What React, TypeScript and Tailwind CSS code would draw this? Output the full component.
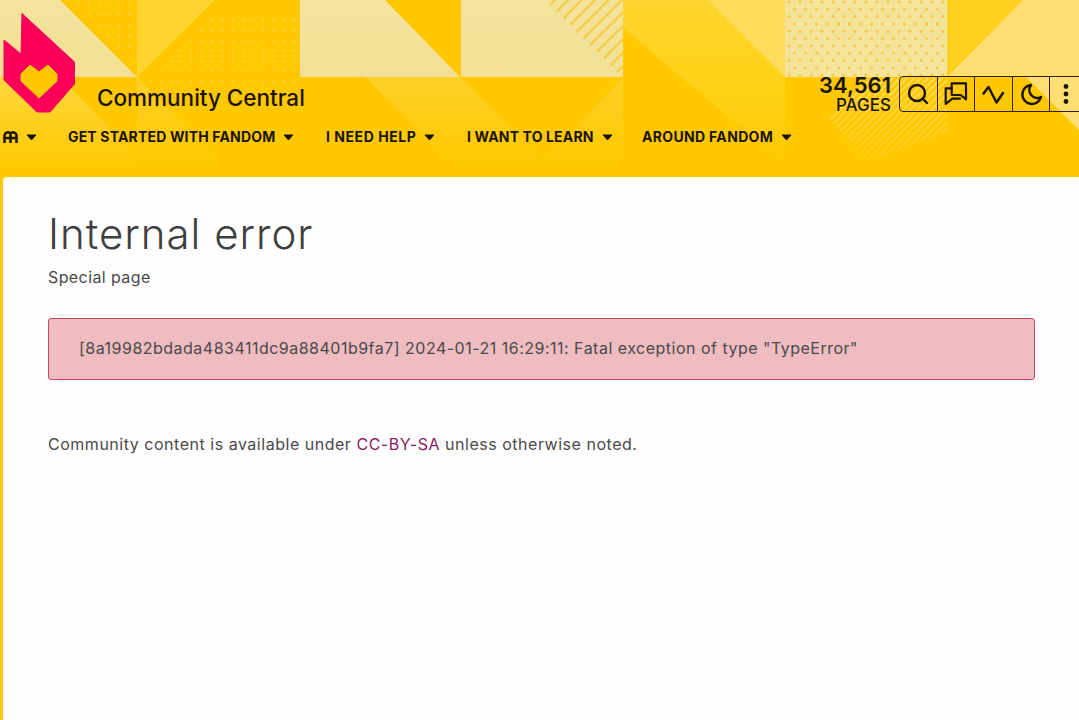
import { Search } from "lucide-react";

const INK = "#1a1400";

function Caret() {
  return (
    <svg width="11" height="7" viewBox="0 0 11 7" className="ml-[8px] mt-[1px] shrink-0">
      <path d="M1 1h9L5.500 6z" fill={INK} stroke={INK} strokeLinejoin="round" />
    </svg>
  );
}

function Banner() {
  const dots: { x: number; y: number }[] = [];
  for (let y = 5; y < 75; y += 10.3) {
    for (let x = 68; x < 136; x += 10.3) {
      if (x - 60 > y + 4) dots.push({ x, y });
    }
  }
  for (let y = 20; y < 82; y += 10.3) {
    for (let x = 140; x < 297; x += 10.3) {
      if (x + y > 225) dots.push({ x, y });
    }
  }
  const grid: { x: number; y: number }[] = [];
  for (let r = 0; r < 11; r++) {
    for (let c = 0; c < 15; c++) {
      grid.push({ x: 789 + c * 11 + (r % 2 ? 5.5 : 0), y: 2 + r * 7.3 });
    }
  }
  const stripes = [0, 1, 2, 3, 4, 5, 6, 7, 8, 9, 10];
  const fine = Array.from({ length: 32 }, (_, i) => 780 + i * 7);
  return (
    <svg className="absolute inset-0" width="1079" height="177" viewBox="0 0 1079 177">
      <defs>
        <linearGradient id="fadeA" x1="0" y1="77" x2="0" y2="170" gradientUnits="userSpaceOnUse">
          <stop offset="0" stopColor="#ffd63d" />
          <stop offset="1" stopColor="#ffc800" />
        </linearGradient>
        <linearGradient id="fadeB" x1="0" y1="77" x2="0" y2="165" gradientUnits="userSpaceOnUse">
          <stop offset="0" stopColor="#ffd028" />
          <stop offset="1" stopColor="#ffc800" />
        </linearGradient>
        <linearGradient id="fadeC" x1="0" y1="0" x2="0" y2="165" gradientUnits="userSpaceOnUse">
          <stop offset="0" stopColor="#ffd52e" />
          <stop offset="0.6" stopColor="#ffd014" />
          <stop offset="1" stopColor="#ffc800" />
        </linearGradient>
        <linearGradient id="fadeFine" x1="0" y1="78" x2="0" y2="162" gradientUnits="userSpaceOnUse">
          <stop offset="0" stopColor="#ffdd63" />
          <stop offset="1" stopColor="#ffcc10" />
        </linearGradient>
        <linearGradient id="pale" x1="0" y1="0" x2="0" y2="77" gradientUnits="userSpaceOnUse">
          <stop offset="0" stopColor="#f4e39c" />
          <stop offset="1" stopColor="#f3e096" />
        </linearGradient>
        <clipPath id="fineClip">
          <polygon points="793,78 947,78 947,132 868,162" />
        </clipPath>
      </defs>
      <rect width="1079" height="177" fill="#ffc800" />
      {/* top row */}
      <polygon points="0,0 60,0 137,77 0,77" fill="url(#pale)" />
      <polygon points="137,0 215,0 137,77" fill="#ffd42e" />
      <polygon points="300,0 385,0 460,77 300,77" fill="url(#pale)" />
      <rect x="461" y="0" width="162" height="77" fill="url(#pale)" />
      <polygon points="623,0 785,0 785,165 623,28" fill="url(#fadeC)" />
      <polygon points="708,0 785,0 785,77" fill="#ffdc5c" />
      <rect x="785" y="0" width="162" height="77" fill="#f5e39a" />
      <polygon points="947,0 1023,0 947,75" fill="#ffd21f" />
      <polygon points="1023,0 1079,0 1079,130 1026,77 947,77" fill="#ffdf74" />
      {/* lower row, fading into the base colour */}
      <polygon points="0,77 60,77 145,165 0,165" fill="url(#fadeA)" />
      <polygon points="137,77 225,165 137,165" fill="url(#fadeB)" />
      <polygon points="365,77 460,77 548,165 453,165" fill="url(#fadeB)" />
      <polygon points="539,165 623,78 623,165" fill="url(#fadeB)" />
      {/* dots and stripes */}
      {dots.map((d, i) => (
        <circle key={i} cx={d.x} cy={d.y} r="1.1" fill="#ffd649" />
      ))}
      {grid.map((d, i) => (
        <circle key={i} cx={d.x} cy={d.y} r="1.5" fill="#f5cb42" />
      ))}
      <g stroke="#f5cf4a" strokeWidth="2.4">
        {stripes.map((i) => {
          const sx = 550 + i * 6.7;
          const sy = 5 + i * 6.7;
          const d = Math.min(sy, 623 - sx);
          return <line key={i} x1={sx} y1={sy} x2={sx + d} y2={sy - d} />;
        })}
      </g>
      <g clipPath="url(#fineClip)">
        <g stroke="url(#fadeFine)" strokeWidth="1.800">
          {fine.map((k) => (
            <line key={k} x1={k} y1={170} x2={k + 92} y2={78} />
          ))}
        </g>
      </g>
    </svg>
  );
}

function Logo() {
  return (
    <svg width="72" height="100" viewBox="3 13 72 100" className="shrink-0">
      <path d="M22 13.500 74.500 62v22L50 112H37L4 80V40l17 14z" fill="#fa005a" stroke="#fa005a" strokeLinejoin="round" />
      <path d="M30 65l9 7 9-7 9 9v7L39 98 21 81v-7z" fill="#ffc800" stroke="#ffc800" strokeLinejoin="round" />
    </svg>
  );
}

function ToolButton({ children, last }: { children: React.ReactNode; last?: boolean }) {
  return (
    <div
      className={
        last
          ? "w-[38px] h-full flex items-center justify-center pr-[7px]"
          : "w-[38px] h-full flex items-center justify-center border-r border-[#2a2000]"
      }
    >
      {children}
    </div>
  );
}

export default function App() {
  const navItems = [
    { label: "GET STARTED WITH FANDOM", cls: "w-[258px] tracking-[0.17px]" },
    { label: "I NEED HELP", cls: "w-[141px] tracking-[0.55px]" },
    { label: "I WANT TO LEARN", cls: "w-[175px] tracking-[0.15px]" },
    { label: "AROUND FANDOM", cls: "w-[180px] tracking-[0.33px]" },
  ];
  return (
    <div
      className="h-screen overflow-hidden bg-[#ffc800] text-[#3a3a3a]"
      style={{ fontFamily: "Inter, 'Noto Sans', sans-serif" }}
    >
      <header className="relative h-[177px] overflow-hidden">
        <Banner />
        <div className="relative flex flex-col h-full">
          <div className="flex items-start pl-[3px] h-[118px]">
            <div className="pt-[13px]">
              <Logo />
            </div>
            <div className="ml-[22px] mt-[84px] text-[22.5px] leading-[27px] font-medium text-[#1a1400]">
              Community Central
            </div>
            <div className="ml-auto flex items-start pt-[76px] w-[270px] justify-end">
              <div className="flex flex-col items-end mr-[8px] text-[#1a1400]">
                <div className="text-[22px] leading-[22px] font-semibold -mt-[2px]">34,561</div>
                <div className="text-[17px] leading-[17px] font-medium mt-[1px]">PAGES</div>
              </div>
              <div className="flex w-[190px] -mr-[10px] h-[36px] border border-[#2a2000] rounded-[4px] shrink-0">
                <ToolButton>
                  <Search size={24} strokeWidth={2.4} color={INK} />
                </ToolButton>
                <ToolButton>
                  <svg width="26" height="26" viewBox="0 0 26 26" fill="none" stroke={INK} strokeWidth="2.200" strokeLinejoin="round" strokeLinecap="round">
                    <path d="M8.700 12.300V2.300H23V18.300L17.700 14H8.700" />
                    <path d="M8.700 7.300H2.700V23L9.300 17.700H17" />
                  </svg>
                </ToolButton>
                <ToolButton>
                  <svg width="24" height="24" viewBox="0 0 24 24" fill="none" stroke={INK} strokeWidth="2.500" strokeLinecap="round" strokeLinejoin="round">
                    <path d="M2.500 11.500L7.500 5l8 15.500L22 11" />
                  </svg>
                </ToolButton>
                <ToolButton>
                  <svg width="24" height="24" viewBox="0 0 24 24" fill="none" stroke={INK} strokeWidth="2.500" strokeLinecap="round" strokeLinejoin="round">
                    <path d="M12 3a9.500 9.500 0 1 0 10 12 8 8 0 0 1-10-12z" />
                  </svg>
                </ToolButton>
                <ToolButton last>
                  <svg width="6" height="22" viewBox="0 0 6 22" fill={INK}>
                    <circle cx="3" cy="3.500" r="2.400" />
                    <circle cx="3" cy="11" r="2.400" />
                    <circle cx="3" cy="18.500" r="2.400" />
                  </svg>
                </ToolButton>
              </div>
            </div>
          </div>
          <nav className="flex items-center h-[37px] pl-[3px] text-[14px] font-bold text-[#1a1400]">
            <div className="flex items-center w-[65px]">
              <svg width="15" height="13" viewBox="0 0 15 13" fill="none" stroke={INK} strokeWidth="2.500" strokeLinejoin="round">
                <path d="M1.500 13V5a3.500 3.500 0 0 1 6 -1.500a3.500 3.500 0 0 1 6 1.500v8M1.500 8h12M7.500 4v9" />
              </svg>
              <Caret />
            </div>
            {navItems.map((t) => (
              <div key={t.label} className={`flex items-center whitespace-nowrap ${t.cls}`}>
                {t.label}
                <Caret />
              </div>
            ))}
          </nav>
        </div>
      </header>
      <main className="ml-[3px] h-[543px] bg-[#fefefe] rounded-tl-[4px] pl-[45px] pr-[44px] pt-[32px]">
        <h1 className="text-[42px] leading-[50px] font-light tracking-[1px] text-[#3f3f3f]">Internal error</h1>
        <div className="text-[16px] leading-[24px] mt-[6px] tracking-[0.4px] text-[#4a4a4a]">Special page</div>
        <div className="mt-[29px] h-[62px] rounded-[3px] border border-[#bf4d5f] bg-[#eebcc1] flex items-center pl-[30px] pb-[2px] text-[16px] tracking-[0.49px] text-[#4a4a4a]">
          [8a19982bdada483411dc9a88401b9fa7] 2024-01-21 16:29:11: Fatal exception of type "TypeError"
        </div>
        <p className="mt-[52px] text-[16px] leading-[24px] tracking-[0.52px] text-[#4a4a4a]">
          Community content is available under <a className="text-[#8a1c5f]">CC-BY-SA</a> unless otherwise noted.
        </p>
      </main>
    </div>
  );
}
